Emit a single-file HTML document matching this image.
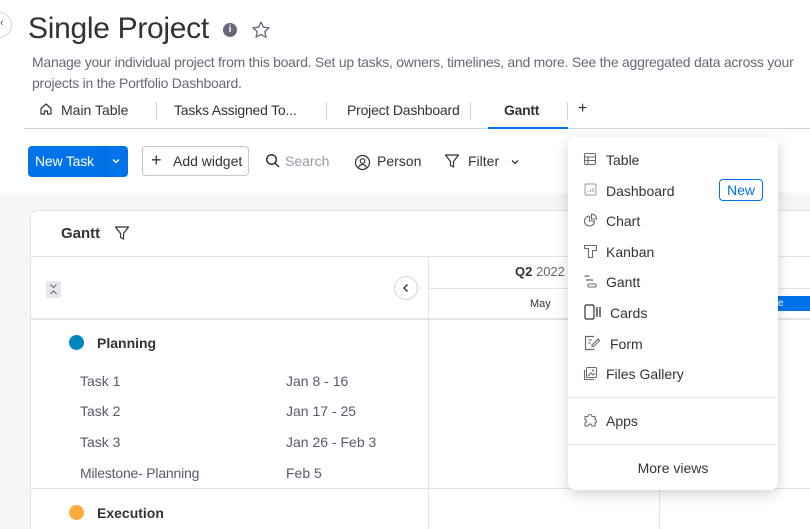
<!DOCTYPE html>
<html><head><meta charset="utf-8"><style>
*{box-sizing:border-box;margin:0;padding:0}
html,body{width:810px;height:529px;overflow:hidden}
body{background:#fff;font-family:"Liberation Sans",sans-serif;color:#323338;position:relative}
.a{position:absolute}
.t{font-size:14px;color:#323338}
svg{display:block}
</style></head><body>
<div class="a" style="left:-14px;top:12px;width:26px;height:26px;border:1px solid #d0d4e4;border-radius:50%;background:#fff"></div>
<div class="a" style="left:0;top:17px;font-size:11px;color:#555">‹</div>
<div class="a" style="left:28px;top:12px;font-size:30px;font-weight:500;letter-spacing:-0.3px;color:#323338">Single Project</div>
<div class="a" style="left:223px;top:23px;width:14px;height:14px;border-radius:50%;background:#676879;color:#fff;font-size:10px;font-weight:bold;text-align:center;line-height:14px">i</div>
<svg class="a" style="left:251px;top:20px" width="20" height="20" viewBox="0 0 20 20"><path d="M10 2l2.4 5.2 5.6.6-4.2 3.8 1.2 5.6L10 14.4 5 17.2l1.2-5.6L2 7.8l5.6-.6z" fill="none" stroke="#676879" stroke-width="1.3" stroke-linejoin="round"/></svg>
<div class="a" style="left:32px;top:52px;width:770px;font-size:14px;letter-spacing:-0.25px;line-height:21px;color:#676879">Manage your individual project from this board. Set up tasks, owners, timelines, and more. See the aggregated data across your projects in the Portfolio Dashboard.</div>
<svg class="a" style="left:39px;top:102px" width="14" height="14" viewBox="0 0 14 14"><path d="M2 6.5L7 2l5 4.5V12H8.5V9h-3v3H2z" fill="none" stroke="#323338" stroke-width="1.2" stroke-linejoin="round"/></svg>
<div class="a t" style="left:61px;top:102px">Main Table</div>
<div class="a" style="left:156px;top:102px;width:1px;height:18px;background:#d0d4e4"></div>
<div class="a t" style="left:174px;top:102px;letter-spacing:-0.2px">Tasks Assigned To...</div>
<div class="a" style="left:326px;top:102px;width:1px;height:18px;background:#d0d4e4"></div>
<div class="a t" style="left:347px;top:102px;letter-spacing:-0.2px">Project Dashboard</div>
<div class="a" style="left:470px;top:102px;width:1px;height:18px;background:#d0d4e4"></div>
<div class="a t" style="left:504px;top:102px;font-weight:bold;letter-spacing:-0.3px">Gantt</div>
<div class="a" style="left:567px;top:102px;width:1px;height:18px;background:#d0d4e4"></div>
<div class="a t" style="left:578px;top:100px;font-size:16px">+</div>
<div class="a" style="left:24px;top:128px;width:786px;height:1px;background:#d0d4e4"></div>
<div class="a" style="left:488px;top:127px;width:80px;height:2px;background:#0073ea"></div>
<div class="a" style="left:28px;top:146px;width:100px;height:31px;background:#0073ea;border-radius:4px"></div>
<div class="a" style="left:35px;top:153px;color:#fff;font-size:14px;letter-spacing:-0.2px">New Task</div>
<div class="a" style="left:105px;top:146px;width:1px;height:31px;background:#0060c0"></div>
<svg class="a" style="left:111px;top:157px" width="10" height="8" viewBox="0 0 10 8"><path d="M2 2.5l3 3 3-3" fill="none" stroke="#fff" stroke-width="1.4"/></svg>
<div class="a" style="left:142px;top:146px;width:107px;height:30px;border:1px solid #c3c6d4;border-radius:4px"></div>
<div class="a t" style="left:151px;top:151px;font-size:18px;line-height:18px;font-weight:300">+</div>
<div class="a t" style="left:173px;top:153px">Add widget</div>
<svg class="a" style="left:265px;top:153px" width="16" height="16" viewBox="0 0 16 16"><circle cx="6.5" cy="6.5" r="4.8" fill="none" stroke="#323338" stroke-width="1.5"/><path d="M10 10l4 4" stroke="#323338" stroke-width="1.5"/></svg>
<div class="a" style="left:285px;top:153px;font-size:14px;color:#9699a6">Search</div>
<svg class="a" style="left:354px;top:154px" width="17" height="17" viewBox="0 0 17 17"><circle cx="8.5" cy="8.5" r="7" fill="none" stroke="#323338" stroke-width="1.2"/><circle cx="8.5" cy="7" r="2.3" fill="none" stroke="#323338" stroke-width="1.2"/><path d="M4.5 13.5c1-2 2.4-3 4-3s3 1 4 3" fill="none" stroke="#323338" stroke-width="1.2"/></svg>
<div class="a t" style="left:377px;top:153px">Person</div>
<svg class="a" style="left:444px;top:153px" width="16" height="16" viewBox="0 0 16 16"><path d="M1.5 2h13L9.5 8.5V14l-3-1.5v-4z" fill="none" stroke="#323338" stroke-width="1.2" stroke-linejoin="round"/></svg>
<div class="a t" style="left:468px;top:153px">Filter</div>
<svg class="a" style="left:510px;top:158px" width="10" height="8" viewBox="0 0 10 8"><path d="M2 2.5l3 3 3-3" fill="none" stroke="#323338" stroke-width="1.3"/></svg>
<div class="a" style="left:0;top:193px;width:810px;height:336px;background:#f5f6f8"></div>
<div class="a" style="left:30px;top:210px;width:790px;height:330px;background:#fff;border:1px solid #e1e3ec;border-radius:8px"></div>
<div class="a" style="left:61px;top:225px;font-size:15px;font-weight:bold;color:#323338">Gantt</div>
<svg class="a" style="left:114px;top:225px" width="16" height="16" viewBox="0 0 16 16"><path d="M1.5 2h13L9.5 8.5V14l-3-1.5v-4z" fill="none" stroke="#323338" stroke-width="1.2" stroke-linejoin="round"/></svg>
<div class="a" style="left:31px;top:256px;width:779px;height:1px;background:#e1e3ec"></div>
<div class="a" style="left:428px;top:257px;width:1px;height:272px;background:#e1e3ec"></div>
<div class="a" style="left:31px;top:318px;width:779px;height:2px;background:#e1e3ec"></div>
<div class="a" style="left:429px;top:288px;width:381px;height:1px;background:#e1e3ec"></div>
<div class="a" style="left:31px;top:488px;width:779px;height:1px;background:#e1e3ec"></div>
<div class="a" style="left:659px;top:488px;width:1px;height:41px;background:#e1e3ec"></div>
<div class="a" style="left:46px;top:281px;width:15px;height:17px;background:#e6e7ec;border-radius:2px"></div>
<svg class="a" style="left:46px;top:281px" width="15" height="17" viewBox="0 0 15 17"><path d="M4.5 3.5l3 3 3-3M4.5 13l3-3 3 3" fill="none" stroke="#676879" stroke-width="1.1"/></svg>
<div class="a" style="left:394px;top:276px;width:24px;height:24px;border:1px solid #d0d4e4;border-radius:50%;background:#fff"></div>
<svg class="a" style="left:401px;top:283px" width="10" height="10" viewBox="0 0 10 10"><path d="M6.5 1.5L3 5l3.5 3.5" fill="none" stroke="#323338" stroke-width="1.4"/></svg>
<div class="a" style="left:515px;top:264px;font-size:13px;color:#323338"><b>Q2</b> <span style="color:#676879">2022</span></div>
<div class="a" style="left:530px;top:298px;font-size:11px;color:#323338">May</div>
<div class="a" style="left:778px;top:296px;width:32px;height:15px;background:#0073ea;color:#fff;font-size:10px;line-height:15px">e</div>
<div class="a" style="left:69px;top:335px;width:15px;height:15px;border-radius:50%;background:#0086c0"></div>
<div class="a" style="left:97px;top:335px;font-size:14px;font-weight:bold">Planning</div>
<div class="a" style="left:80px;top:373px;font-size:14px;color:#555a6e">Task 1</div><div class="a" style="left:286px;top:373px;font-size:14px;color:#555a6e">Jan 8 - 16</div>
<div class="a" style="left:80px;top:403px;font-size:14px;color:#555a6e">Task 2</div><div class="a" style="left:286px;top:403px;font-size:14px;color:#555a6e">Jan 17 - 25</div>
<div class="a" style="left:80px;top:434px;font-size:14px;color:#555a6e">Task 3</div><div class="a" style="left:286px;top:434px;font-size:14px;color:#555a6e">Jan 26 - Feb 3</div>
<div class="a" style="left:80px;top:465px;font-size:14px;color:#555a6e;letter-spacing:-0.2px">Milestone- Planning</div><div class="a" style="left:286px;top:465px;font-size:14px;color:#555a6e">Feb 5</div>
<div class="a" style="left:69px;top:505px;width:15px;height:15px;border-radius:50%;background:#fdab3d"></div>
<div class="a" style="left:97px;top:505px;font-size:14px;font-weight:bold">Execution</div>
<div class="a" style="left:568px;top:137px;width:210px;height:353px;background:#fff;border-radius:8px;box-shadow:0 4px 14px rgba(0,0,0,0.18)"></div>
<svg class="a" style="left:583px;top:152px" width="14" height="14" viewBox="0 0 14 14"><rect x="1.5" y="1.5" width="11" height="11" rx="1.5" fill="none" stroke="#676879" stroke-width="1.1"/><path d="M1.5 5h11M1.5 8.5h11M5 5v7.5" stroke="#676879" stroke-width="1.1"/></svg>
<div class="a t" style="left:606px;top:152px">Table</div>
<svg class="a" style="left:584px;top:183px" width="13" height="13" viewBox="0 0 13 13"><rect x="1" y="1" width="11" height="11" rx="1.5" fill="none" stroke="#9699a6" stroke-width="1"/><path d="M4 9V8M6.5 9V6.5M9 9V5" stroke="#9699a6" stroke-width="1"/></svg>
<div class="a t" style="left:606px;top:183px">Dashboard</div>
<div class="a" style="left:719px;top:179px;width:44px;height:22px;border:1px solid #0073ea;border-radius:4px;color:#0073ea;font-size:14px;text-align:center;line-height:20px">New</div>
<svg class="a" style="left:583px;top:213px" width="15" height="15" viewBox="0 0 15 15"><path d="M6.5 3a5 5 0 1 0 5 5h-5z" fill="none" stroke="#676879" stroke-width="1.1"/><path d="M8.5 1v5h5a5 5 0 0 0-5-5z" fill="none" stroke="#676879" stroke-width="1.1"/></svg>
<div class="a t" style="left:606px;top:213px">Chart</div>
<svg class="a" style="left:583px;top:244px" width="15" height="15" viewBox="0 0 15 15"><path d="M1.5 1.5h12v5h-4v7h-4v-9h-4z" fill="none" stroke="#676879" stroke-width="1.1" stroke-linejoin="round"/><path d="M5.5 4.5v3" stroke="#676879" stroke-width="1.1"/></svg>
<div class="a t" style="left:606px;top:244px">Kanban</div>
<svg class="a" style="left:583px;top:274px" width="15" height="15" viewBox="0 0 15 15"><path d="M1.5 2h5M3 6h7" stroke="#676879" stroke-width="1.3"/><rect x="5" y="10" width="8" height="3" rx="1" fill="none" stroke="#676879" stroke-width="1.1"/></svg>
<div class="a t" style="left:606px;top:274px">Gantt</div>
<svg class="a" style="left:584px;top:304px" width="18" height="16" viewBox="0 0 18 16"><rect x="1" y="1" width="9" height="14" rx="1.5" fill="none" stroke="#323338" stroke-width="1.2"/><path d="M13 3v10M16 3v10" stroke="#323338" stroke-width="1.3"/></svg>
<div class="a t" style="left:610px;top:305px">Cards</div>
<svg class="a" style="left:584px;top:335px" width="17" height="16" viewBox="0 0 17 16"><path d="M10 1.5H1.5v13h9" fill="none" stroke="#676879" stroke-width="1.2"/><path d="M4 5h4M4 8h3M8 10l6-6 1.5 1.5-6 6H8z" fill="none" stroke="#676879" stroke-width="1.1"/></svg>
<div class="a t" style="left:610px;top:336px">Form</div>
<svg class="a" style="left:583px;top:366px" width="15" height="15" viewBox="0 0 15 15"><rect x="3.5" y="1.5" width="10" height="10" rx="1" fill="none" stroke="#676879" stroke-width="1.1"/><path d="M1.5 4v9.5H11M5 10l3-3 2 2 2-2" fill="none" stroke="#676879" stroke-width="1.1"/><circle cx="10" cy="4.5" r="1" fill="#676879"/></svg>
<div class="a t" style="left:606px;top:366px">Files Gallery</div>
<div class="a" style="left:568px;top:397px;width:210px;height:1px;background:#e6e9ef"></div>
<svg class="a" style="left:583px;top:413px" width="15" height="15" viewBox="0 0 15 15"><path d="M5 3.5a2 2 0 0 1 4 0h3v3a1.8 1.8 0 0 1 0 3.5v3H9a2 2 0 0 0-4 0H2v-3a1.8 1.8 0 0 0 0-3.5v-3z" fill="none" stroke="#676879" stroke-width="1.1" stroke-linejoin="round"/></svg>
<div class="a t" style="left:606px;top:413px">Apps</div>
<div class="a" style="left:568px;top:444px;width:210px;height:1px;background:#e6e9ef"></div>
<div class="a" style="left:568px;top:460px;width:210px;text-align:center;font-size:14px;color:#323338">More views</div>
</body></html>
